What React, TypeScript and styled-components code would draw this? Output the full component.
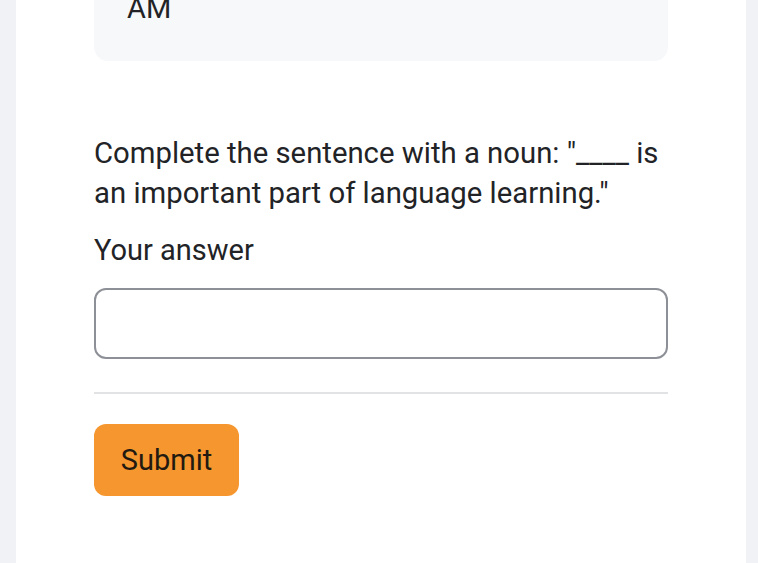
import React from "react";
import styled, { createGlobalStyle } from "styled-components";

const GlobalStyle = createGlobalStyle`
  html, body {
    margin: 0;
    padding: 0;
    background: #f1f2f6;
    font-family: Roboto, "Liberation Sans", Arial, sans-serif;
    color: #222326;
  }
  * { box-sizing: border-box; }
`;

const Page = styled.div`
  padding: 0 12px 0 16px;
  min-height: 563px;
  overflow: hidden;
`;

const Card = styled.div`
  background: #ffffff;
  min-height: 600px;
  padding: 0 78px 40px;
  margin-top: -12px;
`;

const InfoBox = styled.div`
  background: #f7f8fa;
  border-radius: 0 0 14px 14px;
  padding: 0 33px 33px;
  font-size: 29px;
  line-height: 40px;
  color: #222326;
`;

const Question = styled.p`
  margin: 72px 0 0;
  font-size: 29.3px;
  line-height: 40px;
  color: #222326;
`;

const Label = styled.label`
  display: block;
  margin-top: 17px;
  font-size: 29px;
  line-height: 40px;
  color: #222326;
`;

const AnswerInput = styled.input`
  display: block;
  width: 100%;
  height: 71px;
  margin-top: 18px;
  border: 2px solid #8d9097;
  border-radius: 12px;
  background: #fff;
  font: inherit;
  font-size: 29px;
  padding: 0 20px;
  outline: none;
`;

const Divider = styled.hr`
  border: none;
  height: 2px;
  background: #e2e3e5;
  margin: 33px 0 0;
`;

const SubmitButton = styled.button`
  margin-top: 30px;
  height: 72px;
  width: 145px;
  border: none;
  border-radius: 12px;
  background: #f5962f;
  color: #221a10;
  font-family: inherit;
  font-size: 29px;
  cursor: pointer;
`;

export default function App() {
  return (
    <>
      <GlobalStyle />
      <Page>
        <Card>
          <InfoBox>AM</InfoBox>
          <Question>
            Complete the sentence with a noun: "____ is an important part of
            language learning."
          </Question>
          <Label htmlFor="answer">Your answer</Label>
          <AnswerInput id="answer" type="text" />
          <Divider />
          <SubmitButton>Submit</SubmitButton>
        </Card>
      </Page>
    </>
  );
}
